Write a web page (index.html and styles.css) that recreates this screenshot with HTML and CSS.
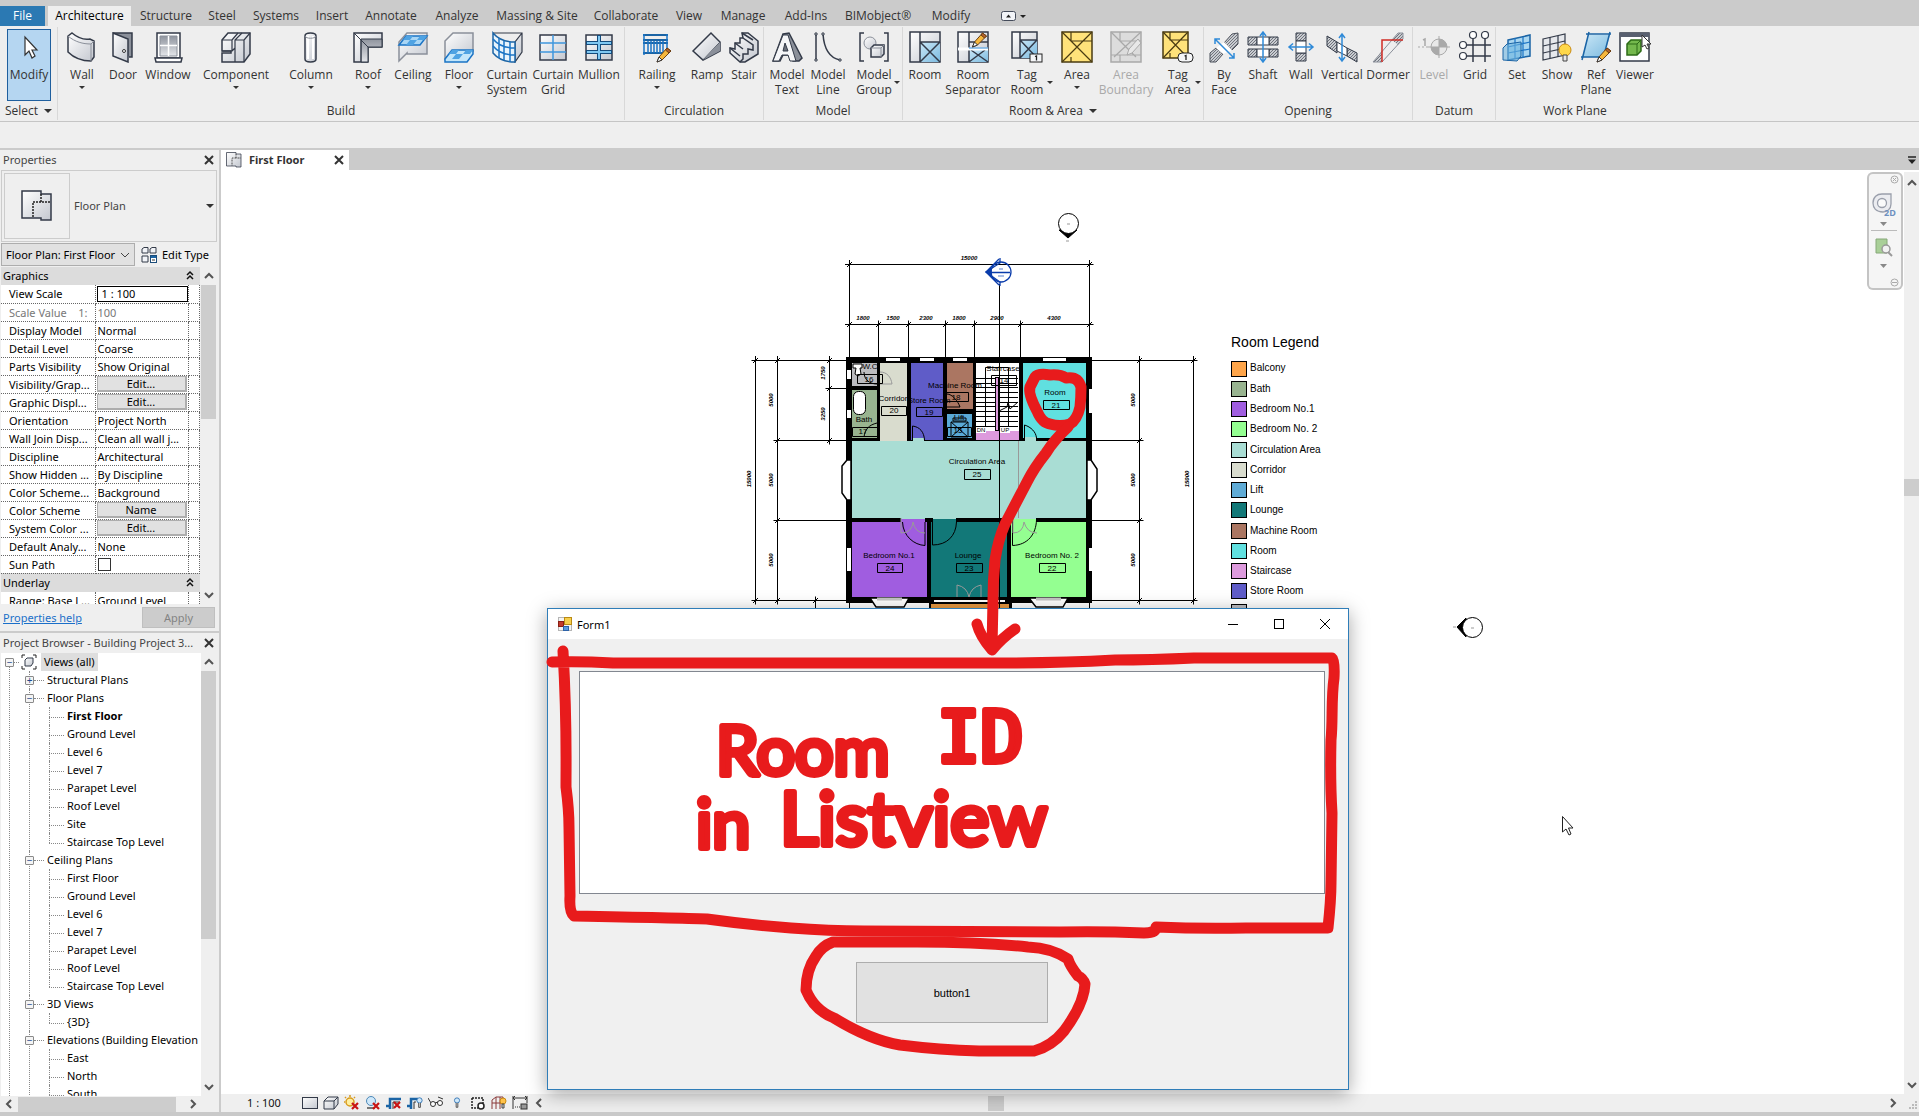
FILE: index.html
```html
<!DOCTYPE html>
<html lang="en">
<head>
    <meta charset="UTF-8">
    <meta name="viewport" content="width=device-width, initial-scale=1.0">
    <title>First Floor - Building Project</title>
    <link rel="stylesheet" href="styles.css">
</head>
<body>
    <!-- shared gradients and small icon parts -->
    <svg class="defs" aria-hidden="true">
        <defs>
            <linearGradient id="metal" x1="0" y1="0" x2="1" y2="1">
                <stop offset="0" stop-color="#ffffff"/>
                <stop offset="1" stop-color="#c3c7cf"/>
            </linearGradient>
            <linearGradient id="dark" x1="0" y1="0" x2="0" y2="1">
                <stop offset="0" stop-color="#8f949e"/>
                <stop offset="1" stop-color="#e4e6ea"/>
            </linearGradient>
            <linearGradient id="sky" x1="0" y1="0" x2="1" y2="1">
                <stop offset="0" stop-color="#c9e6f6"/>
                <stop offset="1" stop-color="#7dbbe0"/>
            </linearGradient>
            <pattern id="hatch" width="3" height="3" patternUnits="userSpaceOnUse">
                <rect width="3" height="3" fill="#c9ccd1"/>
                <path d="M0 3L3 0" stroke="#70747c"/>
            </pattern>
            <symbol id="pencil" viewBox="0 0 16 16">
                <path d="M1 15L3 10L11 1L15 4L6 13Z" fill="#f6b73c" stroke="#6b3f14"/>
                <path d="M1 15L3 10L6 13Z" fill="#fff" stroke="#333"/>
                <path d="M9.500 3L13 6L15 4L11 1Z" fill="#b5622c" stroke="#6b3f14"/>
            </symbol>
            <symbol id="chev-up" viewBox="0 0 10 8"><path d="M1 6L5 2L9 6" fill="none" stroke="#555" stroke-width="2"/></symbol>
            <symbol id="chev-down" viewBox="0 0 10 8"><path d="M1 2L5 6L9 2" fill="none" stroke="#555" stroke-width="2"/></symbol>
            <symbol id="chev-left" viewBox="0 0 8 10"><path d="M6 1L2 5L6 9" fill="none" stroke="#555" stroke-width="2"/></symbol>
            <symbol id="chev-right" viewBox="0 0 8 10"><path d="M2 1L6 5L2 9" fill="none" stroke="#555" stroke-width="2"/></symbol>
            <symbol id="cross" viewBox="0 0 10 10"><path d="M1 1L9 9M9 1L1 9" fill="none" stroke="#333" stroke-width="2"/></symbol>
            <symbol id="redx" viewBox="0 0 8 8"><path d="M1 1L7 7M7 1L1 7" fill="none" stroke="#c81414" stroke-width="2.200"/></symbol>
            <symbol id="collapse" viewBox="0 0 8 10"><path d="M1 5L4 2L7 5M1 9L4 6L7 9" fill="none" stroke="#111" stroke-width="1.500"/></symbol>
            <symbol id="plan" viewBox="0 0 32 32">
                <path d="M1 1H20V4H30V30H20V28H1Z" fill="url(#metal)" stroke="#333a48" stroke-width="1.500"/>
                <path d="M20 4V12H30M20 12H12V28" fill="none" stroke="#222" stroke-width="1.500" stroke-dasharray="2 1"/>
            </symbol>
            <symbol id="bulb" viewBox="0 0 8 14">
                <circle cx="4" cy="4" r="3" fill="#cfe8fa" stroke="#2c6fb0"/>
                <path d="M3 7V12H5V7" fill="#ddd" stroke="#444"/>
            </symbol>
            <g id="tick"><path d="M-2.500 2.500L2.500 -2.500M-4 0H4M0 -4V4"/></g>
        </defs>
    </svg>

    <nav class="tabs">
        <a href="#" class="file">File</a>
        <a href="#" class="active">Architecture</a>
        <a href="#">Structure</a>
        <a href="#">Steel</a>
        <a href="#">Systems</a>
        <a href="#">Insert</a>
        <a href="#">Annotate</a>
        <a href="#">Analyze</a>
        <a href="#">Massing &amp; Site</a>
        <a href="#">Collaborate</a>
        <a href="#">View</a>
        <a href="#">Manage</a>
        <a href="#">Add-Ins</a>
        <a href="#">BIMobject®</a>
        <a href="#">Modify</a>
        <button class="ribbon-toggle" aria-label="Minimize ribbon">
            <svg width="26" height="10" viewBox="0 0 26 10"><rect x=".5" y=".5" width="14" height="9" rx="2" fill="#f2f4f8" stroke="#444b5a"/><path d="M5 6.500L7.500 3.500L10 6.500Z" fill="#222"/><path d="M19 4H25L22 7Z" fill="#222"/></svg>
        </button>
    </nav>

    <header class="ribbon">
        <section class="panel select">
            <div class="tools">
                <button class="tool pressed">
                    <svg viewBox="0 0 32 32"><path d="M12 6V24L16 20L19 27L22 25L19 19H24Z" fill="#fff" stroke="#333" stroke-width="1.200"/></svg>
                    <span>Modify</span>
                </button>
            </div>
            <h2>Select <i class="arrow big"></i></h2>
        </section>

        <section class="panel build">
            <div class="tools">
                <button class="tool">
                    <svg viewBox="0 0 32 32"><path d="M2 5L6 2C12 7 19 9 24 8L28 10V26L25 30C15 30 8 27 2 21Z" fill="url(#metal)" stroke="#333a48" stroke-width="1.500"/><path d="M2 5C9 11 17 13 25 13V30M25 13L28 10" fill="none" stroke="#8b909a"/></svg>
                    <span>Wall</span><i class="arrow"></i>
                </button>
                <button class="tool">
                    <svg viewBox="0 0 32 32"><path d="M6 2H25V26H22" fill="#8b909a" stroke="#333a48" stroke-width="1.500"/><path d="M6 2L21 8V31L6 25Z" fill="url(#metal)" stroke="#333a48" stroke-width="1.500"/><circle cx="17" cy="20" r="1.500" fill="#fff" stroke="#333"/></svg>
                    <span>Door</span>
                </button>
                <button class="tool">
                    <svg viewBox="0 0 32 32"><path d="M5 2H28V27H5Z" fill="#fff" stroke="#333a48" stroke-width="1.500"/><path d="M8 5H25V25H8Z" fill="url(#dark)" stroke="#8b909a"/><path d="M16.500 5V25M8 14.500H25" stroke="#fff" stroke-width="1.500"/><path d="M3 27H30L29 31H4Z" fill="#fff" stroke="#333a48" stroke-width="1.500"/></svg>
                    <span>Window</span>
                </button>
                <button class="tool">
                    <svg viewBox="0 0 32 32"><path d="M2 9L8 2H30V23L24 31H2V22H11V20H2Z" fill="url(#metal)" stroke="#333a48" stroke-width="1.500"/><path d="M2 9H12V20H2M12 9L18 2M15 31V9L22 2M15 9H24M24 31V9L30 2M12 20L15 17" fill="none" stroke="#333a48" stroke-width="1.200"/></svg>
                    <span>Component</span><i class="arrow"></i>
                </button>
                <button class="tool">
                    <svg viewBox="0 0 32 32"><path d="M10 5C10 1 21 1 21 5V28C21 32 10 32 10 28Z" fill="url(#metal)" stroke="#333a48" stroke-width="1.500"/><path d="M13 5V28M18 5V28" stroke="#fff" stroke-width="2"/><path d="M10 5C11 8 20 8 21 5" fill="none" stroke="#8b909a"/></svg>
                    <span>Column</span><i class="arrow"></i>
                </button>
                <button class="tool">
                    <svg viewBox="0 0 32 32"><path d="M2 2H30V16H16V31H2Z" fill="url(#metal)" stroke="#333a48" stroke-width="1.500"/><path d="M30 8H9V31L16 31V16H30Z" fill="url(#dark)" stroke="#333a48"/><path d="M2 2L16 16M9 9V31" stroke="#333a48"/></svg>
                    <span>Roof</span><i class="arrow"></i>
                </button>
                <button class="tool">
                    <svg viewBox="0 0 32 32"><path d="M2 11L10 2H30V23H10V22L2 30Z" fill="url(#metal)" stroke="#8b909a" stroke-width="1.500"/><path d="M2 14L9 5H30L23 14Z" fill="#a9d6f5" stroke="#1b74c5" stroke-width="1.500"/><path d="M9 5H16L13 9H20L16 14H9L13 9H6ZM23 5H30L27 9H20Z" fill="#4fa3e3"/></svg>
                    <span>Ceiling</span>
                </button>
                <button class="tool">
                    <svg viewBox="0 0 32 32"><path d="M2 10L10 2H30V20H10L2 28Z" fill="url(#metal)" stroke="#8b909a" stroke-width="1.500"/><path d="M2 28L9 19H30V23L24 31H2Z" fill="#c3e6fa" stroke="#1b74c5" stroke-width="1.500"/><path d="M9 19H16L13 23H20L16 28H9L13 23H6ZM23 19H30L27 23H20Z" fill="#4fa3e3"/></svg>
                    <span>Floor</span><i class="arrow"></i>
                </button>
                <button class="tool">
                    <svg viewBox="0 0 32 32"><path d="M2 2H31V21L24 31V11L31 2" fill="url(#metal)" stroke="#333a48" stroke-width="1.200"/><path d="M2 2C7 8 15 11 24 11V31C15 31 7 28 2 22Z" fill="#e8f4fc" stroke="#1b64a5" stroke-width="1.500"/><path d="M2 8C7 14 15 17 24 17M2 15C7 21 15 24 24 24M8 7V27M13 10V29M19 11V31" fill="none" stroke="#1b74c5" stroke-width="1.500"/></svg>
                    <span>Curtain<br>System</span>
                </button>
                <button class="tool">
                    <svg viewBox="0 0 32 32"><rect x="3" y="4" width="26" height="25" fill="url(#metal)" stroke="#333a48" stroke-width="1.500"/><path d="M16 4V29M3 12H29M3 21H29" stroke="#3f97dd" stroke-width="1.500"/></svg>
                    <span>Curtain<br>Grid</span>
                </button>
                <button class="tool">
                    <svg viewBox="0 0 32 32"><rect x="3" y="4" width="26" height="25" fill="url(#metal)" stroke="#333a48" stroke-width="1.500"/><path d="M3 12H29M3 21H29M16 4V29" stroke="#144b7c" stroke-width="4"/><path d="M4 12H28M4 21H28M16 5V28" stroke="#7fc8f2" stroke-width="2"/></svg>
                    <span>Mullion</span>
                </button>
            </div>
            <h2>Build</h2>
        </section>

        <section class="panel circulation">
            <div class="tools">
                <button class="tool">
                    <svg viewBox="0 0 32 32"><path d="M2 4H27M2 9H27M2 12H27M2 22H27" stroke="#1b64a5" stroke-width="2"/><path d="M3 3V24M7 10V22M10 10V22M13 10V22M16 10V22M19 10V22M22 10V22M26 3V24" stroke="#1b74c5" stroke-width="1.500"/><use href="#pencil" x="15" y="16" width="16" height="16"/></svg>
                    <span>Railing</span><i class="arrow"></i>
                </button>
                <button class="tool">
                    <svg viewBox="0 0 32 32"><path d="M2 20L20 2L29 11V20L12 29Z" fill="url(#metal)" stroke="#333a48" stroke-width="1.500"/><path d="M12 29L29 11" stroke="#333a48"/><path d="M12 29L29 11V20Z" fill="#8b909a"/></svg>
                    <span>Ramp</span>
                </button>
                <button class="tool">
                    <svg viewBox="0 0 32 32"><path d="M14 2H20L30 10V23L17 31H12L2 22V17L7 18V12L12 12V7L15 7Z" fill="url(#metal)" stroke="#333a48" stroke-width="1.500"/><path d="M15 7L25 14V19L20 18V23L15 23V28L12 31M14 2L25 9M7 12L15 18M2 17L12 25" fill="none" stroke="#333a48" stroke-width="1.500"/></svg>
                    <span>Stair</span>
                </button>
            </div>
            <h2>Circulation</h2>
        </section>

        <section class="panel model">
            <div class="tools">
                <button class="tool">
                    <svg viewBox="0 0 32 32"><path d="M12 3L18 2L31 27L28 30H22L20 24H12L9 30H2Z" fill="#8b909a" stroke="#333a48" stroke-width="1.500"/><path d="M12 4H17L25 30H19L17 24H11L8 30H2Z" fill="#f5f6f8" stroke="#333a48"/><path d="M14 12L12 20H17Z" fill="#6c717b" stroke="#333a48"/></svg>
                    <span>Model<br>Text</span>
                </button>
                <button class="tool">
                    <svg viewBox="0 0 32 32"><path d="M4 3V29M11 3C12 18 18 27 28 29" fill="none" stroke="#333a48" stroke-width="1.500"/><path d="M3 2H5V4H3ZM3 28H5V30H3ZM10 2H12V4H10ZM27 28H29V30H27Z" fill="#fff" stroke="#333a48"/></svg>
                    <span>Model<br>Line</span>
                </button>
                <button class="tool">
                    <svg viewBox="0 0 32 32"><path d="M6 2H2V30H6M26 2H30V30H26" fill="none" stroke="#333a48" stroke-width="1.500"/><circle cx="12" cy="12" r="6" fill="url(#metal)" stroke="#8b909a"/><path d="M13 17L16 14H26V23L23 26H13Z" fill="url(#metal)" stroke="#333a48" stroke-width="1.500"/><path d="M13 17H23V26M23 17L26 14" fill="none" stroke="#8b909a"/></svg>
                    <span>Model<br>Group</span><i class="arrow side"></i>
                </button>
            </div>
            <h2>Model</h2>
        </section>

        <section class="panel rooms">
            <div class="tools">
                <button class="tool">
                    <svg viewBox="0 0 32 32"><rect x="1" y="1" width="30" height="30" fill="url(#metal)" stroke="#333a48" stroke-width="1.500"/><path d="M11 11H31V31H11Z" fill="url(#sky)"/><path d="M11 1V31M11 11H31M11 11L31 31M31 11L11 31" fill="none" stroke="#333a48" stroke-width="1.500"/></svg>
                    <span>Room</span>
                </button>
                <button class="tool">
                    <svg viewBox="0 0 32 32"><rect x="1" y="1" width="30" height="30" fill="url(#metal)" stroke="#333a48" stroke-width="1.500"/><path d="M12 19H31V31H12Z" fill="url(#sky)"/><path d="M12 1V31M12 11H31M12 31L28 19M31 31L14 19" fill="none" stroke="#333a48" stroke-width="1.500"/><path d="M1 18H31" stroke="#fff" stroke-width="3"/><path d="M12 17H31" stroke="#2f8ad8"/><use href="#pencil" x="14" y="1" width="17" height="16"/></svg>
                    <span>Room<br>Separator</span>
                </button>
                <button class="tool">
                    <svg viewBox="0 0 32 32"><rect x="1" y="1" width="25" height="26" fill="url(#metal)" stroke="#333a48" stroke-width="1.500"/><path d="M9 9H26V27H9Z" fill="url(#sky)"/><path d="M9 1V27M9 9H26M9 9L26 27M26 9L9 27" fill="none" stroke="#333a48" stroke-width="1.500"/><rect x="19" y="23" width="12" height="8" fill="#f5f6f8" stroke="#222"/><path d="M24 25.500L25.500 25V29.500" fill="none" stroke="#222" stroke-width="1.300"/></svg>
                    <span>Tag<br>Room</span><i class="arrow side"></i>
                </button>
                <button class="tool">
                    <svg viewBox="0 0 32 32"><rect x="1" y="1" width="30" height="30" fill="#ffe27a" stroke="#4a3b12" stroke-width="1.500"/><path d="M1 1L31 31M31 1L1 31M10 1V10H31M10 26V31" fill="none" stroke="#4a3b12" stroke-width="1.200"/></svg>
                    <span>Area</span><i class="arrow"></i>
                </button>
                <button class="tool" disabled>
                    <svg viewBox="0 0 32 32"><rect x="1" y="1" width="30" height="30" fill="#dcdcdc" stroke="#a9a9a9" stroke-width="1.500"/><path d="M1 1L26 26M31 1L4 26M10 1V10H31M1 24H31M10 24V31" fill="none" stroke="#a9a9a9" stroke-width="1.200"/><path d="M17 24L19 18L28 8L31 12L22 22Z" fill="#e8e8e8" stroke="#a9a9a9"/></svg>
                    <span>Area<br>Boundary</span>
                </button>
                <button class="tool">
                    <svg viewBox="0 0 32 32"><rect x="1" y="1" width="25" height="26" fill="#ffe27a" stroke="#4a3b12" stroke-width="1.500"/><path d="M1 1L26 27M26 1L1 27M8 1V9H26M8 22V27" fill="none" stroke="#4a3b12" stroke-width="1.200"/><rect x="16" y="22" width="15" height="9" rx="4" fill="#f5f6f8" stroke="#222"/><path d="M22.500 25L24 24.500V29" fill="none" stroke="#222" stroke-width="1.300"/></svg>
                    <span>Tag<br>Area</span><i class="arrow side"></i>
                </button>
            </div>
            <h2>Room &amp; Area <i class="arrow big"></i></h2>
        </section>

        <section class="panel opening">
            <div class="tools">
                <button class="tool">
                    <svg viewBox="0 0 32 32"><path d="M2 31V22L8 17L15 23L8 31ZM16 12L24 3L30 2V13L24 19Z" fill="url(#hatch)" stroke="#4b505a"/><path d="M8 17L16 11L24 19L15 23Z" fill="#fff"/><path d="M7 8L26 27M7 13V8H12M26 22V27H21" fill="none" stroke="#2f8ad8" stroke-width="1.500"/></svg>
                    <span>By<br>Face</span>
                </button>
                <button class="tool">
                    <svg viewBox="0 0 32 32"><path d="M1 6H10V14H1ZM22 6H31V14H22ZM1 18H10V26H1ZM22 18H31V26H22Z" fill="url(#hatch)" stroke="#333a48"/><path d="M10 6H22V14H10ZM10 18H22V26H10Z" fill="#fff" stroke="#333a48"/><path d="M16 2V30M13 5L16 1L19 5M13 27L16 31L19 27" fill="none" stroke="#2f8ad8" stroke-width="1.500"/></svg>
                    <span>Shaft</span>
                </button>
                <button class="tool">
                    <svg viewBox="0 0 32 32"><path d="M11 2H21V10H11ZM11 22H21V30H11Z" fill="url(#hatch)" stroke="#333a48"/><path d="M11 10H21V22H11Z" fill="#fff" stroke="#333a48"/><path d="M4 16H28M8 12.500L4 16L8 19.500M24 12.500L28 16L24 19.500" fill="none" stroke="#2f8ad8" stroke-width="1.500"/></svg>
                    <span>Wall</span>
                </button>
                <button class="tool">
                    <svg viewBox="0 0 32 32"><path d="M1 5L11 11V22L1 15ZM21 17L31 22V31L21 25Z" fill="url(#hatch)" stroke="#333a48"/><path d="M11 11L21 17V25L11 20Z" fill="#fff" stroke="#333a48"/><path d="M16 3V30M13 7L16 3L19 7M13 26L16 30L19 26" fill="none" stroke="#2f8ad8" stroke-width="1.500"/></svg>
                    <span>Vertical</span>
                </button>
                <button class="tool">
                    <svg viewBox="0 0 32 32"><path d="M1 31L10 20V31ZM20 9L26 2H31V8L26 14Z" fill="url(#hatch)"/><path d="M1 31L26 2H31V8L10 31Z" fill="none" stroke="#8b909a"/><path d="M10 31V9H31" fill="none" stroke="#cf2b24" stroke-width="1.500"/></svg>
                    <span>Dormer</span>
                </button>
            </div>
            <h2>Opening</h2>
        </section>

        <section class="panel datum">
            <div class="tools">
                <button class="tool" disabled>
                    <svg viewBox="0 0 32 32"><path d="M0 16H12" stroke="#a9a9a9" stroke-dasharray="2 2"/><path d="M5 9L7 8V15" fill="none" stroke="#a9a9a9" stroke-width="1.500"/><circle cx="21" cy="16" r="8" fill="#e8e8e8" stroke="#a9a9a9"/><path d="M21 8A8 8 0 0 1 29 16H21ZM21 24A8 8 0 0 1 13 16H21Z" fill="#a9a9a9"/><path d="M21 5V27M10 16H32" stroke="#a9a9a9"/></svg>
                    <span>Level</span>
                </button>
                <button class="tool">
                    <svg viewBox="0 0 32 32"><path d="M7 14H32M7 25H32M14 6V31M26 6V31" stroke="#333a48" stroke-width="1.500"/><g fill="#fff" stroke="#333a48" stroke-width="1.200"><circle cx="14" cy="4" r="3.500"/><circle cx="26" cy="4" r="3.500"/><circle cx="4" cy="14" r="3.500"/><circle cx="4" cy="25" r="3.500"/></g></svg>
                    <span>Grid</span>
                </button>
            </div>
            <h2>Datum</h2>
        </section>

        <section class="panel workplane">
            <div class="tools">
                <button class="tool">
                    <svg viewBox="0 0 32 32"><path d="M7 9L29 4V25L7 29Z" fill="#a9d6f0" stroke="#1b64a5" stroke-width="1.500"/><path d="M14 7V28M22 6V27M7 16L29 11M7 22L29 18" fill="none" stroke="#1b74c5" stroke-width="1.200"/><path d="M2 17L6 13L20 11V25L16 30L2 29Z" fill="#6fb5e0" fill-opacity=".6" stroke="#1b64a5"/></svg>
                    <span>Set</span>
                </button>
                <button class="tool">
                    <svg viewBox="0 0 32 32"><path d="M2 8L24 3V24L2 29Z" fill="#e6e8ec" stroke="#333a48" stroke-width="1.200"/><path d="M9 6V27M17 5V26M2 15L24 10M2 22L24 17" stroke="#333a48" stroke-width="1.200"/><circle cx="24" cy="19" r="6" fill="#ffd84a" stroke="#c98a12"/><path d="M22 24H26V30H22Z" fill="#e8e8e8" stroke="#444"/></svg>
                    <span>Show</span>
                </button>
                <button class="tool">
                    <svg viewBox="0 0 32 32"><path d="M8 4H30L24 26H2Z" fill="url(#sky)"/><path d="M6 3H31M1 26H24M9 1L2 29M30 1L24 24" stroke="#1b64a5" stroke-width="1.500"/><use href="#pencil" x="16" y="16" width="16" height="16"/></svg>
                    <span>Ref<br>Plane</span>
                </button>
                <button class="tool">
                    <svg viewBox="0 0 32 32"><rect x="1" y="2" width="29" height="28" fill="#fff" stroke="#333a48" stroke-width="1.500"/><path d="M1 2H30V6H1Z" fill="#596070"/><path d="M8 13L12 9H22V20L18 24H8Z" fill="#74b84c" stroke="#2d6b17" stroke-width="1.500"/><path d="M8 13H18V24M18 13L22 9" fill="none" stroke="#2d6b17"/><path d="M23 4V16L26 14L28 18L30 17L28 13H32Z" fill="#fff" stroke="#333"/></svg>
                    <span>Viewer</span>
                </button>
            </div>
            <h2>Work Plane</h2>
        </section>
    </header>

    <div class="options-bar"></div>

    <div class="workspace">
        <aside class="sidebar">
            <section class="properties">
                <h3>Properties <button class="close" aria-label="Close properties"><svg width="10" height="10"><use href="#cross"/></svg></button></h3>
                <div class="type-box">
                    <div class="thumb"><svg width="32" height="32"><use href="#plan"/></svg></div>
                    <span>Floor Plan</span>
                    <i class="arrow big"></i>
                </div>
                <div class="type-row">
                    <select aria-label="View type"><option>Floor Plan: First Floor</option></select>
                    <button class="edit-type">
                        <svg width="16" height="16" viewBox="0 0 16 16"><path d="M1 2L3 .5H7V6H1ZM9 2L11 .5H15V6H9ZM1 9H7V15H1Z" fill="#f2f4f8" stroke="#333a48"/><rect x="9.500" y="8.500" width="6" height="7" fill="#fff" stroke="#1b4c7a"/><path d="M10 10H15" stroke="#1b64a5" stroke-width="2"/><path d="M11 13H14" stroke="#333"/></svg>
                        Edit Type
                    </button>
                </div>
                <div class="grid-wrap">
                    <div class="grid-scroll">
                        <table>
                            <colgroup><col class="col-name"><col class="col-value"><col></colgroup>
                            <tr class="group"><th colspan="3">Graphics <svg width="8" height="10"><use href="#collapse"/></svg></th></tr>
                            <tr><td><label for="scale">View Scale</label></td><td><input type="text" id="scale" value="1 : 100"></td><td></td></tr>
                            <tr class="dim"><td>Scale Value &nbsp;&nbsp; 1:</td><td>100</td><td></td></tr>
                            <tr><td>Display Model</td><td>Normal</td><td></td></tr>
                            <tr><td>Detail Level</td><td>Coarse</td><td></td></tr>
                            <tr><td>Parts Visibility</td><td>Show Original</td><td></td></tr>
                            <tr><td>Visibility/Grap...</td><td><button>Edit...</button></td><td></td></tr>
                            <tr><td>Graphic Displ...</td><td><button>Edit...</button></td><td></td></tr>
                            <tr><td>Orientation</td><td>Project North</td><td></td></tr>
                            <tr><td>Wall Join Disp...</td><td>Clean all wall j...</td><td></td></tr>
                            <tr><td>Discipline</td><td>Architectural</td><td></td></tr>
                            <tr><td>Show Hidden ...</td><td>By Discipline</td><td></td></tr>
                            <tr><td>Color Scheme...</td><td>Background</td><td></td></tr>
                            <tr><td>Color Scheme</td><td><button>Name</button></td><td></td></tr>
                            <tr><td>System Color ...</td><td><button>Edit...</button></td><td></td></tr>
                            <tr><td>Default Analy...</td><td>None</td><td></td></tr>
                            <tr><td><label for="sun">Sun Path</label></td><td><input type="checkbox" id="sun"></td><td></td></tr>
                            <tr class="group"><th colspan="3">Underlay <svg width="8" height="10"><use href="#collapse"/></svg></th></tr>
                            <tr><td>Range: Base L...</td><td>Ground Level</td><td></td></tr>
                        </table>
                    </div>
                    <div class="vbar">
                        <svg width="10" height="8"><use href="#chev-up"/></svg>
                        <div class="thumb-v props-thumb"></div>
                        <svg class="end" width="10" height="8"><use href="#chev-down"/></svg>
                    </div>
                </div>
                <div class="props-foot">
                    <a href="#">Properties help</a>
                    <button disabled>Apply</button>
                </div>
            </section>

            <section class="browser">
                <h3>Project Browser - Building Project 3... <button class="close" aria-label="Close browser"><svg width="10" height="10"><use href="#cross"/></svg></button></h3>
                <div class="tree-wrap">
                    <ul class="tree">
                        <li>
                            <div class="node root"><button class="toggle" aria-label="Collapse">−</button>
                                <svg width="16" height="16" viewBox="0 0 16 16"><path d="M4 1H1V4M12 1H15V4M4 15H1V12M12 15H15V12" fill="none" stroke="#222"/><path d="M4 6L6 4H12V9L10 12H4Z" fill="url(#metal)" stroke="#333a48"/></svg>
                                <span class="selected">Views (all)</span></div>
                            <ul>
                                <li><div class="node"><button class="toggle" aria-label="Expand">+</button><span>Structural Plans</span></div></li>
                                <li><div class="node"><button class="toggle" aria-label="Collapse">−</button><span>Floor Plans</span></div>
                                    <ul class="leaves">
                                        <li><b>First Floor</b></li>
                                        <li>Ground Level</li>
                                        <li>Level 6</li>
                                        <li>Level 7</li>
                                        <li>Parapet Level</li>
                                        <li>Roof Level</li>
                                        <li>Site</li>
                                        <li>Staircase Top Level</li>
                                    </ul>
                                </li>
                                <li><div class="node"><button class="toggle" aria-label="Collapse">−</button><span>Ceiling Plans</span></div>
                                    <ul class="leaves">
                                        <li>First Floor</li>
                                        <li>Ground Level</li>
                                        <li>Level 6</li>
                                        <li>Level 7</li>
                                        <li>Parapet Level</li>
                                        <li>Roof Level</li>
                                        <li>Staircase Top Level</li>
                                    </ul>
                                </li>
                                <li><div class="node"><button class="toggle" aria-label="Collapse">−</button><span>3D Views</span></div>
                                    <ul class="leaves">
                                        <li>{3D}</li>
                                    </ul>
                                </li>
                                <li><div class="node"><button class="toggle" aria-label="Collapse">−</button><span>Elevations (Building Elevation</span></div>
                                    <ul class="leaves">
                                        <li>East</li>
                                        <li>North</li>
                                        <li>South</li>
                                    </ul>
                                </li>
                            </ul>
                        </li>
                    </ul>
                    <div class="vbar">
                        <svg width="10" height="8"><use href="#chev-up"/></svg>
                        <div class="thumb-v tree-thumb"></div>
                        <svg class="end" width="10" height="8"><use href="#chev-down"/></svg>
                    </div>
                </div>
                <div class="hbar">
                    <svg width="8" height="10"><use href="#chev-left"/></svg>
                    <div class="thumb-h"></div>
                    <svg width="8" height="10"><use href="#chev-right"/></svg>
                </div>
            </section>
        </aside>

        <main class="view">
            <div class="doc-tabs">
                <div class="doc-tab">
                    <svg width="16" height="16"><use href="#plan"/></svg>
                    <b>First Floor</b>
                    <button class="close" aria-label="Close view"><svg width="10" height="10"><use href="#cross"/></svg></button>
                </div>
                <svg class="tab-menu" width="8" height="8" viewBox="0 0 8 8"><path d="M0 1H8" stroke="#222" stroke-width="1.500"/><path d="M0 3.500H8L4 8Z" fill="#222"/></svg>
            </div>

            <div class="canvas-row">
                <div class="canvas">
                    <svg class="drawing">
                        <g transform="translate(-221 -170)">
                            <!-- dimension strings -->
                            <g class="line">
                                <path d="M845 264.500H1093M845 324.500H1093M849.500 260V357M1089.500 260V357M878.500 324V357M908.500 324V357M945.500 324V357M974.500 324V357M1020.500 324V357"/>
                                <path d="M755.500 356V604M777.500 356V604M829.500 356V443M752 360.500H847M826 388.500H847M775 440.500H847M775 520.500H847M752 600.500H847"/>
                                <path d="M1139.500 356V604M1193.500 356V604M1091 360.500H1197M1091 440.500H1143M1091 520.500H1143M1091 600.500H1197"/>
                                <path d="M815.500 597V609M849.500 600V609M1089.500 600V609"/>
                                <use href="#tick" x="849.500" y="264.500"/><use href="#tick" x="1089.500" y="264.500"/>
                                <use href="#tick" x="849.500" y="324.500"/><use href="#tick" x="878.500" y="324.500"/><use href="#tick" x="908.500" y="324.500"/><use href="#tick" x="945.500" y="324.500"/><use href="#tick" x="974.500" y="324.500"/><use href="#tick" x="1020.500" y="324.500"/><use href="#tick" x="1089.500" y="324.500"/>
                                <use href="#tick" x="755.500" y="360.500"/><use href="#tick" x="755.500" y="600.500"/><use href="#tick" x="777.500" y="360.500"/><use href="#tick" x="777.500" y="440.500"/><use href="#tick" x="777.500" y="520.500"/><use href="#tick" x="777.500" y="600.500"/><use href="#tick" x="829.500" y="360.500"/><use href="#tick" x="829.500" y="388.500"/><use href="#tick" x="829.500" y="440.500"/><use href="#tick" x="815.500" y="600.500"/>
                                <use href="#tick" x="1139.500" y="360.500"/><use href="#tick" x="1139.500" y="440.500"/><use href="#tick" x="1139.500" y="520.500"/><use href="#tick" x="1139.500" y="600.500"/><use href="#tick" x="1193.500" y="360.500"/><use href="#tick" x="1193.500" y="600.500"/>
                            </g>
                            <g class="dim-text">
                                <text x="969" y="260">15000</text>
                                <text x="863" y="320">1800</text><text x="893" y="320">1500</text><text x="926" y="320">2300</text><text x="959" y="320">1800</text><text x="997" y="320">2900</text><text x="1054" y="320">4300</text>
                                <text transform="translate(825 373) rotate(-90)">1750</text>
                                <text transform="translate(825 414) rotate(-90)">3250</text>
                                <text transform="translate(773 400) rotate(-90)">5000</text>
                                <text transform="translate(773 480) rotate(-90)">5000</text>
                                <text transform="translate(773 560) rotate(-90)">5000</text>
                                <text transform="translate(751 479) rotate(-90)">15000</text>
                                <text transform="translate(1135 400) rotate(-90)">5000</text>
                                <text transform="translate(1135 480) rotate(-90)">5000</text>
                                <text transform="translate(1135 560) rotate(-90)">5000</text>
                                <text transform="translate(1189 479) rotate(-90)">15000</text>
                            </g>

                            <!-- walls and rooms -->
                            <rect x="929" y="601" width="83" height="8" fill="#000"/>
                            <rect x="931" y="604" width="78" height="6" fill="#e79841"/>
                            <rect x="846" y="357" width="246" height="246" fill="#000"/>
                            <rect x="852" y="363" width="25" height="23" fill="#bcbcc0"/>
                            <rect x="852" y="390" width="25" height="48" fill="#98b490"/>
                            <rect x="880" y="363" width="27" height="78" fill="#d9dcce"/>
                            <rect x="911" y="363" width="32" height="77" fill="#5f5cc8"/>
                            <rect x="947" y="363" width="26" height="46" fill="#ab7662"/>
                            <rect x="947" y="414" width="25" height="24" fill="#5aa9d6"/>
                            <rect x="976" y="363" width="43" height="68" fill="#fff"/>
                            <rect x="976" y="431" width="43" height="9" fill="#dd9add"/>
                            <rect x="1023" y="363" width="63" height="75" fill="#60e0e0"/>
                            <rect x="852" y="441" width="234" height="77" fill="#a9ddd4"/>
                            <rect x="852" y="522" width="75" height="75" fill="#a05de0"/>
                            <rect x="931" y="522" width="76" height="75" fill="#127878"/>
                            <rect x="1011" y="522" width="75" height="75" fill="#94ff91"/>
                            <!-- wall gaps at the doors -->
                            <path d="M913 438H924V442H913ZM1025 437H1036V442H1025Z" fill="#a9ddd4"/>
                            <path d="M901 518H925V523H901Z" fill="#a05de0"/>
                            <path d="M933 518H956V523H933Z" fill="#127878"/>
                            <path d="M1013 518H1036V523H1013Z" fill="#94ff91"/>
                            <path d="M901 518H925M933 518H956M1013 518H1036" stroke="#a9ddd4" stroke-width="2"/>
                            <!-- windows -->
                            <g fill="#fff">
                                <path d="M886 358H900V361H886ZM920 358H934V361H920ZM953 358H967V361H953ZM1043 358H1066V361H1043Z"/>
                                <path d="M847 370H851V379H847ZM847 410H851V418H847ZM847 548H851V571H847ZM1089 389H1092V413H1089ZM1089 548H1092V571H1089ZM934 600H1005V602H934Z"/>
                                <path d="M847 460L842 466V493L847 500H851V460Z" stroke="#000" stroke-width="1.500"/>
                                <path d="M1087 460H1091L1097 469V491L1091 500H1087Z" stroke="#000" stroke-width="1.500"/>
                                <path d="M870 598H909L904 607H876Z" stroke="#000" stroke-width="1.500"/>
                                <path d="M1029 598H1068L1063 607H1036Z" stroke="#000" stroke-width="1.500"/>
                            </g>
                            <path d="M877 599H902M1036 599H1061" stroke="#c4c4c4" stroke-width="3"/>
                            <!-- doors -->
                            <g class="line">
                                <path d="M902.500 522C903 536 914 545 925 545.500V522M932.500 522V545C947 545 956 536 956.500 522M1012.500 520V545.500C1028 545 1036 534 1036.500 520"/>
                                <path d="M912.500 440V426C920 427 924 432 924.500 440M1024.500 438V425C1031 427 1036 432 1036.500 438M877 423C869 425 865 429 864 437M864 372C864 380 870 384 877 384M947 394C952 394 958 401 960 407H947"/>
                            </g>
                            <g class="line faint">
                                <path d="M901 518V533Q912 533 913 522Q915 533 925 533M1013 518V533Q1023 533 1024 522Q1027 533 1037 533M957 597V585Q967 587 969 597Q971 587 981 585V597M1018.500 441V518M880 372C887 372 891 377 892 384H880"/>
                            </g>
                            <!-- fixtures -->
                            <g class="line">
                                <path class="white" d="M853 364H862V368H860L861 374L858 376L855 374L856 368H853Z"/>
                                <rect class="white" x="853.500" y="391.500" width="12" height="23" rx="5"/>
                                <path d="M951 422H968V437H951ZM951 422L968 437M968 422L951 437M953 418H966V421H953Z"/>
                            </g>
                            <!-- stairs -->
                            <g class="line">
                                <path d="M976 378.500H1018M976 383.500H1018M976 387.500H1018M976 392.500H1018M976 397.500H1018M976 402.500H1018M976 406.500H1018M976 411.500H1018M976 416.500H1018M976 421.500H1018M976 426.500H1018M985.500 430V367.500H1008.500V430M997 412L1007 407L1008 402L1010 409L1018 402"/>
                                <rect class="rail" x="995.500" y="377.500" width="3" height="53"/>
                            </g>
                            <path d="M976 427H986V433H976ZM1000 427H1010V433H1000Z" fill="#fff"/>
                            <!-- section line -->
                            <path class="line" d="M999.500 284V609"/>
                            <g class="room-text">
                                <text x="870" y="369">W.C</text>
                                <text x="864" y="422">Bath</text>
                                <text x="893" y="401">Corridor</text>
                                <text x="929" y="403">Store Room</text>
                                <text x="955" y="388">Machine Room</text>
                                <text x="959" y="420">Lift</text>
                                <text x="1003" y="371">Staircase</text>
                                <text x="1055" y="395">Room</text>
                                <text x="977" y="464">Circulation Area</text>
                                <text x="889" y="558">Bedroom No.1</text>
                                <text x="968" y="558">Lounge</text>
                                <text x="1052" y="558">Bedroom No. 2</text>
                                <text x="869" y="382">16</text><text x="863" y="434">17</text><text x="894" y="413">20</text><text x="929" y="415">19</text><text x="956" y="400">18</text><text x="958" y="433">15</text><text x="1004" y="383">14</text><text x="1056" y="408">21</text><text x="977" y="477">25</text><text x="890" y="571">24</text><text x="969" y="571">23</text><text x="1052" y="571">22</text>
                            </g>
                            <g class="small-text"><text x="981" y="432">DN</text><text x="1005" y="432">UP</text></g>
                            <g class="line">
                                <path d="M857.500 374.500H882.500V383.500H857.500ZM852.500 427.500H877.500V436.500H852.500ZM881.500 406.500H906.500V415.500H881.500ZM916.500 407.500H942.500V416.500H916.500ZM943.500 392.500H968.500V401.500H943.500ZM947.500 427.500H971.500V436.500H947.500ZM991.500 375.500H1016.500V385.500H991.500ZM1043.500 400.500H1069.500V409.500H1043.500ZM964.500 469.500H990.500V479.500H964.500ZM877.500 563.500H902.500V572.500H877.500ZM956.500 563.500H982.500V572.500H956.500ZM1039.500 563.500H1065.500V572.500H1039.500Z"/>
                            </g>

                            <!-- section and elevation marks -->
                            <g fill="none" stroke="#0a3cab" stroke-width="1.300">
                                <circle cx="1001" cy="272" r="10"/>
                                <path d="M990 272.500H1010M1000 258V263L986 272L1000 282V286"/>
                                <path d="M999 259L986 272L999 285L991 277V267Z" fill="#0a3cab"/>
                                <path d="M999 269H1003M998 276H1004" stroke="#8fa9e0"/>
                            </g>
                            <g stroke="#000">
                                <path d="M1059 230L1068 238L1077 230Z" fill="#000"/>
                                <circle cx="1068.500" cy="223.500" r="10" fill="#fff"/>
                                <path d="M1067 224H1070M1066 241H1069" stroke="#999"/>
                                <path d="M1466 618L1457 627L1466 637Z" fill="#000"/>
                                <circle cx="1472.500" cy="627.500" r="10" fill="#fff"/>
                                <path d="M1471 628H1474M1453 627H1456" stroke="#999"/>
                            </g>

                            <!-- colour scheme legend -->
                            <text class="legend-title" x="1231" y="347">Room Legend</text>
                            <g class="swatch">
                                <rect x="1231.500" y="361.500" fill="#ffa54a"/><rect x="1231.500" y="381.500" fill="#98b490"/><rect x="1231.500" y="401.500" fill="#a05de0"/><rect x="1231.500" y="421.500" fill="#94ff91"/><rect x="1231.500" y="442.500" fill="#a9ddd4"/><rect x="1231.500" y="462.500" fill="#d9dcce"/><rect x="1231.500" y="482.500" fill="#5fabd6"/><rect x="1231.500" y="502.500" fill="#127878"/><rect x="1231.500" y="523.500" fill="#ab7662"/><rect x="1231.500" y="543.500" fill="#60e0e0"/><rect x="1231.500" y="563.500" fill="#dd9add"/><rect x="1231.500" y="583.500" fill="#5f5cc8"/><rect x="1231.500" y="604.500" fill="#bcbcc0"/>
                            </g>
                            <g class="legend-text">
                                <text x="1250" y="371">Balcony</text><text x="1250" y="392">Bath</text><text x="1250" y="412">Bedroom No.1</text><text x="1250" y="432">Bedroom No. 2</text><text x="1250" y="453">Circulation Area</text><text x="1250" y="473">Corridor</text><text x="1250" y="493">Lift</text><text x="1250" y="513">Lounge</text><text x="1250" y="534">Machine Room</text><text x="1250" y="554">Room</text><text x="1250" y="574">Staircase</text><text x="1250" y="594">Store Room</text>
                            </g>
                            <path d="M1562.500 816.500V832L1566 829L1569 835L1571 834L1568.500 828H1573Z" fill="#fff" stroke="#222"/>
                        </g>
                    </svg>

                    <div class="nav-bar">
                        <svg width="36" height="118" viewBox="0 0 36 118">
                            <g fill="none" stroke="#aaa"><circle cx="27.500" cy="7.500" r="3.500"/><path d="M26 6L29 9M29 6L26 9"/><circle cx="27.500" cy="110.500" r="3.500"/><path d="M25 110.500H30"/></g>
                            <path d="M15 22H24V32C24 37 20 40 16 40C9 40 6 36 6 31C6 25 10 22 15 22Z" fill="#ebecf0" stroke="#9a9fab" stroke-width="1.300"/>
                            <circle cx="15" cy="31" r="4.500" fill="#fafafa" stroke="#9a9fab" stroke-width="1.300"/>
                            <path d="M13 50H20L16.500 54Z" fill="#888"/><path d="M4 58.500H30" stroke="#bbb"/>
                            <path d="M9 67H20V81H9Z" fill="#a9cf98" stroke="#86a878"/><circle cx="19" cy="77" r="4" fill="#f2f2f2" stroke="#999" stroke-width="1.500"/><path d="M21 80L25 84" stroke="#999" stroke-width="2"/>
                            <path d="M13 92H20L16.500 96Z" fill="#888"/>
                            <text x="17" y="44">2D</text>
                        </svg>
                    </div>

                    <section class="form-window">
                        <header>
                            <svg width="14" height="14" viewBox="0 0 14 14"><rect x=".5" y=".5" width="13" height="13" fill="#f4f4f4" stroke="#b5b5b5"/><rect x="6.500" y=".5" width="7" height="7" fill="#f7cf4b" stroke="#b98a14"/><rect x=".5" y="4.500" width="5" height="5" fill="#c23a2c" stroke="#8a1f14"/><rect x="5.500" y="9.500" width="5" height="4" fill="#5a9be0" stroke="#2d63a8"/></svg>
                            <h1>Form1</h1>
                            <button aria-label="Minimize"><svg width="12" height="12"><path d="M1 6.500H11" stroke="#000"/></svg></button>
                            <button aria-label="Maximize"><svg width="12" height="12"><rect x="1.500" y="1.500" width="9" height="9" fill="none" stroke="#000"/></svg></button>
                            <button aria-label="Close"><svg width="12" height="12"><path d="M1 1L11 11M11 1L1 11" stroke="#000"/></svg></button>
                        </header>
                        <div class="form-body">
                            <div class="list-view" role="listbox" aria-label="Rooms"></div>
                            <button>button1</button>
                        </div>
                    </section>

                    <!-- red pen markup -->
                    <svg class="ink">
                        <g transform="translate(-221 -170)">
                            <path d="M1035 377Q1038 373 1050 375Q1060 374 1066 378Q1078 376 1081 387Q1081 398 1080 407Q1077 420 1070 424Q1060 427 1050 424Q1042 423 1037 411Q1028 394 1030 387Z"/>
                            <path d="M1068 427Q1054 440 1046 453Q1034 468 1027 482L1005 524Q998 540 995 560Q993 580 993 600L992 648M977 624Q980 636 992 650Q1002 638 1015 629"/>
                            <path d="M552 662Q580 661 613 663H1000Q1060 663 1115 660Q1150 660 1194 658H1332Q1335 660 1334 678C1331 700 1333 720 1331 740Q1330 780 1332 813L1331 883Q1331 900 1328 928H1246Q1200 929 1156 927Q1156 933 1144 933Q1100 931 1060 932L864 931Q830 931 791 928Q750 925 707 919Q680 918 574 916Q569 912 570 896L569 827Q569 810 566 787C566 750 567 720 563 651"/>
                            <path d="M1068 959Q1052 948 1028 947Q980 942 917 942H833Q822 946 816 956Q806 970 806 990Q814 1010 834 1018Q870 1040 900 1045Q940 1050 979 1051H1034Q1052 1046 1064 1031Q1084 1004 1085 984Q1083 978 1078 976Q1070 966 1068 959"/>
                            <g class="handwriting">
                                <text x="716" y="775">Room</text>
                                <text class="caps" x="937" y="762">ID</text>
                                <text x="696" y="848">in</text>
                                <text class="wide" x="780" y="845">Listview</text>
                            </g>
                        </g>
                    </svg>
                </div>
                <div class="vbar view-vbar">
                    <svg width="10" height="8"><use href="#chev-up"/></svg>
                    <div class="thumb-v view-thumb"></div>
                    <svg class="end" width="10" height="8"><use href="#chev-down"/></svg>
                </div>
            </div>

            <div class="view-bar">
                <span class="scale">1 : 100</span>
                <div class="view-icons">
                    <svg viewBox="0 0 16 16"><rect x=".5" y="2.500" width="15" height="11" fill="url(#metal)" stroke="#333a48"/></svg>
                    <svg viewBox="0 0 16 16"><path d="M1 6L5 2H15V9L11 14H1ZM1 6H11V14M11 6L15 2" fill="url(#metal)" stroke="#333a48"/></svg>
                    <svg viewBox="0 0 16 16"><circle cx="6" cy="7" r="4" fill="#fff0a0" stroke="#d89b1c" stroke-width="1.500"/><path d="M6 0V2M0 7H1M1 2L2 3M11 2L10 3" stroke="#d89b1c" stroke-width="1.500"/><use href="#redx" x="7" y="7" width="8" height="8"/></svg>
                    <svg viewBox="0 0 16 16"><circle cx="6" cy="6" r="4.500" fill="#cfe8fa" stroke="#4c88b8"/><path d="M2 13H10" stroke="#777" stroke-width="2"/><use href="#redx" x="7" y="7" width="8" height="8"/></svg>
                    <svg viewBox="0 0 16 16"><path d="M0 11H3M4 14V4H15" fill="none" stroke="#1b64a5" stroke-width="2.500"/><path d="M7 14V7H14" fill="none" stroke="#333"/><use href="#redx" x="7" y="6" width="8" height="8"/></svg>
                    <svg viewBox="0 0 16 16"><path d="M0 11H3M4 14V4H11" fill="none" stroke="#1b64a5" stroke-width="2.500"/><path d="M7 14V7H9" fill="none" stroke="#333"/><use href="#bulb" x="9" y="1" width="7" height="14"/></svg>
                    <svg viewBox="0 0 16 16"><path d="M0 3L3 8M10 2L15 4" stroke="#333"/><circle cx="5" cy="9" r="2.500" fill="#fff" stroke="#333"/><circle cx="12" cy="8" r="2.500" fill="#fff" stroke="#333"/><path d="M7 8L10 7" stroke="#333"/></svg>
                    <svg viewBox="0 0 16 16"><use href="#bulb" x="4" y="2" width="8" height="12"/></svg>
                    <svg viewBox="0 0 16 16"><path d="M2 3H13V8M2 3V13H8" fill="none" stroke="#222" stroke-width="1.500" stroke-dasharray="2 1"/><circle cx="11" cy="11" r="3" fill="#fff" stroke="#222" stroke-width="1.500"/></svg>
                    <svg viewBox="0 0 16 16"><path d="M1 14V5L5 2H12V13M1 8H12M5 2V14M9 2V14" fill="none" stroke="#8a3a3a"/><circle cx="12" cy="6" r="3" fill="#ffc24a" stroke="#c98a12"/><path d="M11 9H13V13H11Z" fill="#ddd" stroke="#444"/></svg>
                    <svg viewBox="0 0 16 16"><path d="M1 1V14M15 1V8M1 3H15M3 1L1 3L3 5M13 1L15 3L13 5" fill="none" stroke="#333"/><path d="M3 12H8" stroke="#333" stroke-dasharray="1 1"/><rect x="9" y="9" width="6" height="5" fill="#999" stroke="#333"/></svg>
                </div>
                <div class="hbar view-hbar">
                    <svg width="8" height="10"><use href="#chev-left"/></svg>
                    <div class="thumb-h"></div>
                    <svg width="8" height="10"><use href="#chev-right"/></svg>
                </div>
                <svg class="grip" width="9" height="9" viewBox="0 0 9 9"><path d="M6 0H8V2H6ZM3 3H5V5H3ZM6 3H8V5H6ZM0 6H2V8H0ZM3 6H5V8H3ZM6 6H8V8H6Z" fill="#bbb"/></svg>
            </div>
        </main>
    </div>
</body>
</html>
```
FILE: styles.css
```css
* {
    margin: 0;
    padding: 0;
    box-sizing: border-box;
}

body {
    height: 100vh;
    display: flex;
    flex-direction: column;
    overflow: hidden;
    background: #efefef;
    color: #333;
    font-family: "Open Sans", "Noto Sans", sans-serif;
    font-size: 12px;
    line-height: 18px;
    border-bottom: 4px solid #c9c9c9;
}

button, input, select {
    font: inherit;
    color: inherit;
    border: none;
    background: none;
}

ul {
    list-style: none;
}

svg {
    flex: none;
}

.defs {
    position: absolute;
    width: 0;
    height: 0;
}

.arrow {
    width: 0;
    height: 0;
    border: 3px solid transparent;
    border-top-color: #333;
    border-bottom: none;
}

.arrow.big {
    border-width: 4px 4px 0;
}

.close {
    display: flex;
    align-items: center;
}

/* ribbon tabs */
.tabs {
    display: grid;
    grid-template-columns: 48px 83px 70px 42px 66px 46px 72px 60px 100px 78px 48px 60px 66px 78px 68px 60px;
    padding-top: 6px;
    height: 26px;
    background: #cbcbcb;
    font-size: 12px;
    line-height: 20px;
}

.tabs a {
    color: #333;
    text-align: center;
    text-decoration: none;
    white-space: nowrap;
}

.tabs .file {
    margin-right: 3px;
    background: #2b79b3;
    color: #fff;
}

.tabs .active {
    background: #eee;
    color: #000;
}

.ribbon-toggle {
    display: flex;
    align-items: center;
    padding-left: 16px;
}

/* ribbon */
.ribbon {
    display: flex;
    height: 96px;
    background: #eee;
    border-bottom: 1px solid #c5c5c5;
}

.panel {
    display: flex;
    flex-direction: column;
    justify-content: space-between;
    margin: 1px 0;
    padding-top: 2px;
    border-right: 1px solid #d8d8d8;
}

.panel:last-child {
    border-right: none;
}

.panel h2 {
    display: flex;
    align-items: center;
    justify-content: center;
    gap: 6px;
    font-size: 12px;
    font-weight: normal;
    line-height: 18px;
}

.tools {
    display: grid;
}

.select .tools { grid-template-columns: 44px; padding: 0 6px 0 7px; }
.build .tools { grid-template-columns: 48px 34px 56px 80px 70px 44px 46px 46px 50px 42px 50px; }
.circulation .tools { grid-template-columns: 64px 36px 38px; }
.model .tools { grid-template-columns: 46px 36px 56px; }
.rooms .tools { grid-template-columns: 44px 52px 56px 44px 54px 50px; }
.opening .tools { grid-template-columns: 40px 38px 38px 44px 48px; }
.datum .tools { grid-template-columns: 42px 40px; }
.workplane .tools { grid-template-columns: 42px 38px 40px 38px; }

.tool {
    position: relative;
    display: flex;
    flex-direction: column;
    align-items: center;
    height: 72px;
    padding-top: 2px;
    line-height: 15px;
    white-space: nowrap;
}

.tool svg {
    width: 32px;
    height: 32px;
    margin-bottom: 4px;
}

.tool .arrow {
    margin-top: 4px;
}

.tool .arrow.side {
    position: absolute;
    right: 2px;
    top: 48px;
}

.tool.pressed {
    background: #b5d6f1;
    outline: 1px solid #1f5f9e;
    outline-offset: -1px;
}

.tool:disabled {
    color: #a9a9a9;
}

.options-bar {
    height: 28px;
    border-bottom: 2px solid #cbcbcb;
}

/* docked palettes */
.workspace {
    flex: 1;
    min-height: 0;
    display: flex;
}

.sidebar {
    flex: none;
    width: 221px;
    display: flex;
    flex-direction: column;
    border-right: 2px solid #cbcbcb;
    font-family: "Noto Sans", sans-serif;
    font-size: 11px;
    color: #000;
}

.sidebar h3 {
    display: flex;
    align-items: center;
    justify-content: space-between;
    height: 20px;
    padding: 0 5px 0 3px;
    font-size: 11px;
    font-weight: normal;
    color: #444;
    white-space: nowrap;
}

.properties {
    flex: 0 0 483px;
    min-height: 0;
    display: flex;
    flex-direction: column;
    border-bottom: 2px solid #cbcbcb;
}

.type-box {
    display: flex;
    align-items: center;
    gap: 4px;
    height: 72px;
    margin: 0 2px 0 1px;
    padding: 2px;
    border: 1px solid #ccc;
    color: #444;
}

.type-box .thumb {
    display: flex;
    align-items: center;
    justify-content: center;
    width: 66px;
    height: 66px;
    border: 1px solid #ccc;
}

.type-box .arrow {
    margin-left: auto;
}

.type-row {
    display: flex;
    align-items: center;
    gap: 6px;
    height: 25px;
    padding-left: 1px;
}

.type-row select {
    appearance: none;
    width: 134px;
    height: 23px;
    padding: 0 16px 0 4px;
    border: 1px solid #adadad;
    background-color: #e1e1e1;
    background-image: url("data:image/svg+xml,%3Csvg xmlns='http://www.w3.org/2000/svg' width='10' height='6'%3E%3Cpath d='M1 1L5 5L9 1' fill='none' stroke='%23444'/%3E%3C/svg%3E");
    background-repeat: no-repeat;
    background-position: right 4px center;
    overflow: hidden;
}

.edit-type {
    display: flex;
    align-items: center;
    gap: 5px;
}

.grid-wrap, .tree-wrap {
    flex: 1;
    min-height: 0;
    display: flex;
    overflow: hidden;
}

.grid-scroll {
    flex: 1;
    overflow: hidden;
}

.grid-scroll table {
    width: 199px;
    margin-left: 1px;
    table-layout: fixed;
    border-collapse: collapse;
    background: #fff;
}

.col-name {
    width: 94px;
}

.col-value {
    width: 93px;
}

.grid-scroll tr {
    height: 18px;
}

.grid-scroll td {
    padding: 0 0 0 8px;
    border-bottom: 1px dotted #666;
    border-right: 1px dotted #666;
    line-height: 17px;
    white-space: nowrap;
    overflow: hidden;
}

.grid-scroll td:nth-child(2) {
    padding-left: 2px;
}

.grid-scroll th {
    padding: 0 6px 0 2px;
    background: #dcdcdc;
    font-weight: normal;
    line-height: 18px;
    text-align: left;
}

.grid-scroll th svg {
    float: right;
    margin-top: 3px;
}

.grid-scroll .dim {
    color: #777;
}

.grid-scroll td input[type="text"] {
    display: block;
    width: 91px;
    height: 16px;
    margin-left: -1px;
    padding-left: 4px;
    border: 1px solid #000;
    background: #fff;
}

.grid-scroll td button {
    display: block;
    width: 90px;
    height: 16px;
    margin-left: -1px;
    background: #e1e1e1;
    border: 1px solid #adadad;
    border-width: 1px 2px 2px 1px;
    line-height: 13px;
}

.grid-scroll td input[type="checkbox"] {
    display: block;
    appearance: none;
    width: 13px;
    height: 13px;
    border: 1px solid #333;
    background: #fff;
}

.props-foot {
    display: flex;
    align-items: center;
    justify-content: space-between;
    height: 27px;
    padding: 0 4px 0 3px;
}

.props-foot a {
    color: #1a6fc9;
}

.props-foot button {
    width: 73px;
    height: 21px;
    background: #ccc;
    border: 1px solid #bfbfbf;
    color: #838383;
}

.vbar {
    flex: none;
    display: flex;
    flex-direction: column;
    align-items: center;
    width: 15px;
    margin-right: 3px;
    padding: 5px 0;
    background: #efefef;
}

.thumb-v {
    width: 15px;
    margin-top: 5px;
    background: #cdcdcd;
}

.vbar .end {
    margin-top: auto;
}

.props-thumb { height: 134px; }
.tree-thumb { height: 62%; }

.browser {
    flex: 1;
    min-height: 0;
    display: flex;
    flex-direction: column;
}

.hbar {
    display: flex;
    align-items: center;
    height: 16px;
    padding: 0 5px;
    gap: 5px;
}

.browser .thumb-h {
    width: 158px;
    height: 15px;
    margin-right: 8px;
    background: #cdcdcd;
}

/* project tree */
.tree {
    flex: 1;
    margin-left: 1px;
    padding-left: 8px;
    background: #fff;
    overflow: hidden;
    white-space: nowrap;
}

.tree li {
    position: relative;
}

.tree ul {
    margin-left: 20px;
}

.tree li::before {
    content: "";
    position: absolute;
    left: 0;
    top: 0;
    height: 100%;
    border-left: 1px dotted #888;
}

.tree > li::before {
    top: 9px;
}

.node {
    display: flex;
    align-items: center;
    height: 18px;
}

.node::before {
    content: "";
    flex: none;
    order: 1;
    width: 10px;
    border-top: 1px dotted #888;
}

.node.root::before {
    width: 5px;
}

.node svg, .node span {
    order: 2;
}

.node span {
    padding: 0 3px;
}

.node.root svg {
    margin: 0 4px 0 2px;
}

.node .selected {
    background: #dedede;
}

.toggle {
    position: relative;
    flex: none;
    width: 9px;
    height: 9px;
    margin-left: -4px;
    border: 1px solid #8a8a8a;
    border-radius: 1px;
    background: #f4f4f4;
    color: #234a8a;
    font-size: 10px;
    line-height: 6px;
}

.leaves li {
    height: 18px;
    padding-left: 18px;
}

.leaves li::after {
    content: "";
    position: absolute;
    left: 0;
    top: 10px;
    width: 15px;
    border-top: 1px dotted #888;
}

.leaves li:last-child::before {
    height: 10px;
}

/* view window */
.view {
    flex: 1;
    min-width: 0;
    display: flex;
    flex-direction: column;
}

.doc-tabs {
    display: flex;
    align-items: center;
    justify-content: space-between;
    height: 20px;
    padding-right: 3px;
    background: #cbcbcb;
}

.doc-tab {
    display: flex;
    align-items: center;
    width: 128px;
    height: 20px;
    padding: 0 5px;
    gap: 7px;
    background: #fff;
    font-family: "Noto Sans", sans-serif;
    font-size: 11px;
}

.doc-tab .close {
    margin-left: auto;
}

.canvas-row {
    flex: 1;
    min-height: 0;
    display: flex;
    background: #fff;
}

.canvas {
    position: relative;
    flex: 1;
}

.drawing, .ink {
    position: absolute;
    inset: 0;
    width: 100%;
    height: 100%;
}

.view-vbar {
    margin: 2px 0 0;
    padding: 7px 0 5px;
}

.view-thumb {
    height: 17px;
    margin-top: 292px;
}

.line {
    fill: none;
    stroke: #000;
    stroke-width: 1;
}

.line.faint {
    stroke: #999;
}

.line .white {
    fill: #fff;
}

.line .rail {
    fill: #dd9add;
}

.dim-text {
    font: italic bold 6px "Liberation Sans", sans-serif;
    text-anchor: middle;
}

.room-text {
    font: 8px "Liberation Sans", sans-serif;
    text-anchor: middle;
}

.small-text {
    font: 6px "Liberation Sans", sans-serif;
    text-anchor: middle;
}

.legend-title {
    font: 14px "Liberation Sans", sans-serif;
}

.legend-text {
    font: 10px "Liberation Sans", sans-serif;
}

.swatch rect {
    width: 15px;
    height: 15px;
    stroke: #000;
}

.nav-bar {
    position: absolute;
    top: 2px;
    right: 1px;
    width: 36px;
    height: 118px;
    border-radius: 6px;
    background: #f5f5f5;
    box-shadow: inset 0 0 0 2px #c4c4c4;
}

.nav-bar text {
    font: bold 9px "Open Sans", sans-serif;
    fill: #6d90c0;
}

/* Form1 dialog */
.form-window {
    position: absolute;
    left: 326px;
    top: 438px;
    width: 802px;
    height: 482px;
    border: 1px solid #2f7db8;
    background: #f0f0f0;
    box-shadow: 0 4px 18px rgba(0, 0, 0, 0.35);
    color: #000;
}

.form-window header {
    display: flex;
    align-items: center;
    height: 30px;
    padding-left: 10px;
    background: #fff;
}

.form-window h1 {
    flex: 1;
    padding-left: 5px;
    font: 11px "Noto Sans", sans-serif;
}

.form-window header button {
    display: flex;
    align-items: center;
    justify-content: center;
    width: 46px;
    height: 30px;
}

.form-body {
    display: flex;
    flex-direction: column;
    align-items: center;
    gap: 68px;
    padding: 32px 23px 0 31px;
}

.list-view {
    width: 100%;
    height: 223px;
    border: 1px solid #828790;
    background: #fff;
}

.form-body button {
    width: 192px;
    height: 61px;
    border: 1px solid #adadad;
    background: #e1e1e1;
    font: 11px "Liberation Sans", sans-serif;
}

.ink {
    pointer-events: none;
    fill: none;
    stroke: #e81b1c;
    stroke-width: 11;
    stroke-linecap: round;
    stroke-linejoin: round;
}

.handwriting {
    fill: #e81b1c;
    stroke-width: 6;
    font: 68px Lato, sans-serif;
}

.handwriting .caps {
    font: 72px "DejaVu Sans Mono", monospace;
}

.handwriting .wide {
    font-size: 74px;
}

/* view control bar */
.view-bar {
    display: flex;
    align-items: center;
    height: 18px;
    padding-left: 2px;
    background: #efefef;
    color: #111;
    font-family: "Noto Sans", sans-serif;
    font-size: 11px;
}

.scale {
    width: 79px;
    padding-left: 24px;
}

.view-icons {
    display: flex;
    gap: 5px;
}

.view-icons svg {
    width: 16px;
    height: 16px;
}

.view-hbar {
    flex: 1;
    padding: 0 12px 0 7px;
}

.view-hbar .thumb-h {
    width: 16px;
    height: 15px;
    margin: 0 auto 0 440px;
    background: #cdcdcd;
}

.grip {
    margin: 4px 1px 0 0;
}
```
